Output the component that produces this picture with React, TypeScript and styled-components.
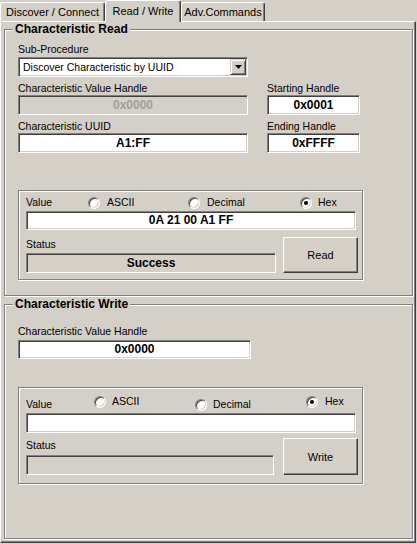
import React from 'react';
import styled, { createGlobalStyle, css } from 'styled-components';

const FACE = '#d4d0c8';

const GlobalStyle = createGlobalStyle`
  html, body { margin: 0; padding: 0; background: ${FACE}; }
  body { font-family: "Liberation Sans", Arial, sans-serif; color: #000; }
  *, *::before, *::after { box-sizing: border-box; }
`;

const sunken = css`
  border: 1px solid;
  border-color: #808080 #ffffff #ffffff #808080;
  box-shadow: inset 1px 1px 0 #404040, inset -1px -1px 0 ${FACE};
`;

const raised = css`
  background: ${FACE};
  border: 1px solid;
  border-color: #ffffff #404040 #404040 #ffffff;
  box-shadow: inset -1px -1px 0 #808080;
`;

const etched = css`
  border: 1px solid #808080;
  box-shadow: inset 1px 1px 0 #ffffff, 1px 1px 0 #ffffff;
`;

const Window = styled.div`
  width: 417px;
  height: 544px;
  background: ${FACE};
  display: flex;
  flex-direction: column;
  overflow: hidden;
  font-size: 10.5px;
  line-height: 13px;
`;

const TabStrip = styled.div`
  flex: none;
  height: 21px;
  display: flex;
  align-items: flex-end;
`;

const Tab = styled.div<{ $active?: boolean; $width: number }>`
  flex: none;
  width: ${p => p.$width}px;
  height: ${p => (p.$active ? 22 : 19)}px;
  margin-bottom: ${p => (p.$active ? -1 : 0)}px;
  padding-top: ${p => (p.$active ? 4 : 3)}px;
  position: relative;
  z-index: ${p => (p.$active ? 2 : 1)};
  background: ${FACE};
  border-top: 1px solid #ffffff;
  border-left: 1px solid #ffffff;
  border-right: 1px solid #404040;
  box-shadow: inset -1px 0 0 #808080;
  border-radius: 3px 3px 0 0;
  font-size: 11px;
  line-height: 13px;
  text-align: center;
  white-space: nowrap;
`;

const Panel = styled.div`
  flex: 1;
  min-height: 0;
  margin: 0 1px 1px 0;
  border: 1px solid;
  border-color: #ffffff #404040 #404040 #ffffff;
  box-shadow: inset -1px -1px 0 #808080;
  padding: 0 2px 3px 3px;
  display: flex;
  flex-direction: column;
`;

const Group = styled.section<{ $top: number; $grow?: boolean }>`
  ${etched};
  margin-top: ${p => p.$top}px;
  display: flex;
  flex-direction: column;
  ${p => p.$grow && css`flex: 1;`}
`;

const Legend = styled.h2`
  align-self: flex-start;
  margin: -8px 0 0 8px;
  padding: 0 2px;
  background: ${FACE};
  font-size: 12px;
  line-height: 14px;
  font-weight: bold;
  white-space: nowrap;
`;

const GroupBody = styled.div<{ $pad: string }>`
  padding: ${p => p.$pad};
  display: flex;
  flex-direction: column;
  align-items: flex-start;
`;

const FieldGrid = styled.div`
  display: grid;
  grid-template-columns: 230px 93px;
  column-gap: 19px;
  row-gap: 5px;
`;

const Field = styled.div<{ $gap?: number; $span?: boolean }>`
  display: flex;
  flex-direction: column;
  gap: ${p => p.$gap ?? 0}px;
  ${p => p.$span && css`grid-column: 1 / -1;`}
`;

const FieldLabel = styled.span<{ $drop?: number }>`
  display: block;
  line-height: 13px;
  white-space: nowrap;
  margin-top: ${p => p.$drop ?? 0}px;
`;

const TextField = styled.div<{ $width?: number; $height: number; $fill?: string; $muted?: boolean; $right?: number }>`
  ${sunken};
  width: ${p => (p.$width ? `${p.$width}px` : 'auto')};
  height: ${p => p.$height}px;
  margin-right: ${p => p.$right ?? 0}px;
  background: ${p => p.$fill ?? '#ffffff'};
  display: flex;
  align-items: center;
  justify-content: center;
  font-size: 12px;
  font-weight: bold;
  color: ${p => (p.$muted ? '#a19e98' : '#000000')};
  white-space: nowrap;
`;

const Combo = styled.div`
  ${sunken};
  width: 230px;
  height: 20px;
  margin-top: 1px;
  padding: 1px;
  background: #ffffff;
  display: flex;
  align-items: center;
`;

const ComboText = styled.span`
  flex: 1;
  padding-left: 3px;
  white-space: nowrap;
`;

const ComboButton = styled.span`
  flex: none;
  width: 16px;
  height: 16px;
  background: ${FACE};
  border: 1px solid;
  border-color: ${FACE} #404040 #404040 ${FACE};
  box-shadow: inset 1px 1px 0 #ffffff, inset -1px -1px 0 #808080;
  display: flex;
  align-items: center;
  justify-content: center;
`;

const ValueBox = styled.div<{ $top: number; $padTop: number; $padBottom: number }>`
  ${etched};
  width: 345px;
  margin-top: ${p => p.$top}px;
  padding: ${p => p.$padTop}px 4px ${p => p.$padBottom}px 7px;
  display: flex;
  flex-direction: column;
`;

const OptionRow = styled.div<{ $cols: string }>`
  display: grid;
  grid-template-columns: ${p => p.$cols};
  align-items: start;
`;

const Radio = styled.label<{ $gap: number; $drop?: number }>`
  display: flex;
  align-items: flex-start;
  gap: ${p => p.$gap}px;
  margin-top: ${p => p.$drop ?? 0}px;
  line-height: 13px;
  white-space: nowrap;
`;

const RadioDot = styled.span<{ $checked?: boolean }>`
  flex: none;
  width: 12px;
  height: 12px;
  margin-top: 1px;
  border-radius: 50%;
  background: #ffffff;
  border: 1px solid;
  border-color: #808080 #ffffff #ffffff #808080;
  box-shadow: inset 1px 1px 0 #404040, inset -1px -1px 0 ${FACE};
  display: flex;
  align-items: center;
  justify-content: center;
  &::after {
    content: '';
    width: 4px;
    height: 4px;
    border-radius: 50%;
    background: #000000;
    display: ${p => (p.$checked ? 'block' : 'none')};
  }
`;

const ActionRow = styled.div<{ $top: number; $gap: number }>`
  display: flex;
  align-items: flex-end;
  gap: ${p => p.$gap}px;
  margin-top: ${p => p.$top}px;
`;

const StatusCol = styled.div<{ $width: number; $gap: number }>`
  width: ${p => p.$width}px;
  display: flex;
  flex-direction: column;
  gap: ${p => p.$gap}px;
`;

const PushButton = styled.button<{ $height: number }>`
  ${raised};
  flex: none;
  width: 75px;
  height: ${p => p.$height}px;
  padding: 0;
  font-family: inherit;
  font-size: 11px;
  color: #000000;
`;

type RadioSpec = { label: string; gap: number; drop?: number; checked?: boolean };

const ValueOptions: React.FC<{ cols: string; labelDrop: number; radios: RadioSpec[] }> = ({ cols, labelDrop, radios }) => (
  <OptionRow $cols={cols}>
    <FieldLabel $drop={labelDrop}>Value</FieldLabel>
    {radios.map(r => (
      <Radio key={r.label} $gap={r.gap} $drop={r.drop}>
        <RadioDot $checked={r.checked} />
        <span>{r.label}</span>
      </Radio>
    ))}
  </OptionRow>
);

export default function App() {
  return (
    <>
      <GlobalStyle />
      <Window>
        <TabStrip>
          <Tab $width={105}>Discover / Connect</Tab>
          <Tab $width={76} $active>Read / Write</Tab>
          <Tab $width={84}>Adv.Commands</Tab>
        </TabStrip>
        <Panel>
          <Group $top={7}>
            <Legend>Characteristic Read</Legend>
            <GroupBody $pad="7px 0 15px 13px">
              <FieldGrid>
                <Field $span>
                  <FieldLabel>Sub-Procedure</FieldLabel>
                  <Combo>
                    <ComboText>Discover Characteristic by UUID</ComboText>
                    <ComboButton>
                      <svg width="7" height="4" viewBox="0 0 7 4">
                        <polygon points="0,0 7,0 3.5,4" fill="#000" />
                      </svg>
                    </ComboButton>
                  </Combo>
                </Field>
                <Field>
                  <FieldLabel>Characteristic Value Handle</FieldLabel>
                  <TextField $height={20} $fill={FACE} $muted>0x0000</TextField>
                </Field>
                <Field>
                  <FieldLabel>Starting Handle</FieldLabel>
                  <TextField $height={20}>0x0001</TextField>
                </Field>
                <Field>
                  <FieldLabel>Characteristic UUID</FieldLabel>
                  <TextField $height={20}>A1:FF</TextField>
                </Field>
                <Field>
                  <FieldLabel>Ending Handle</FieldLabel>
                  <TextField $height={20}>0xFFFF</TextField>
                </Field>
              </FieldGrid>
              <ValueBox $top={37} $padTop={5} $padBottom={6}>
                <ValueOptions
                  cols="62px 100px 112px 1fr"
                  labelDrop={0}
                  radios={[
                    { label: 'ASCII', gap: 7 },
                    { label: 'Decimal', gap: 7 },
                    { label: 'Hex', gap: 6, checked: true },
                  ]}
                />
                <Field $gap={2}>
                  <span />
                  <TextField $height={19} $right={2}>0A 21 00 A1 FF</TextField>
                </Field>
                <ActionRow $top={7} $gap={7}>
                  <StatusCol $width={250} $gap={2}>
                    <FieldLabel>Status</FieldLabel>
                    <TextField $height={20} $fill={FACE}>Success</TextField>
                  </StatusCol>
                  <PushButton $height={36}>Read</PushButton>
                </ActionRow>
              </ValueBox>
            </GroupBody>
          </Group>

          <Group $top={8} $grow>
            <Legend>Characteristic Write</Legend>
            <GroupBody $pad="14px 0 0 13px">
              <Field $gap={2}>
                <FieldLabel>Characteristic Value Handle</FieldLabel>
                <TextField $width={233} $height={19}>0x0000</TextField>
              </Field>
              <ValueBox $top={28} $padTop={7} $padBottom={8}>
                <ValueOptions
                  cols="68px 101px 111px 1fr"
                  labelDrop={3}
                  radios={[
                    { label: 'ASCII', gap: 6, drop: 0 },
                    { label: 'Decimal', gap: 6, drop: 3 },
                    { label: 'Hex', gap: 7, drop: 0, checked: true },
                  ]}
                />
                <Field $gap={2}>
                  <span />
                  <TextField $height={20} $right={2} />
                </Field>
                <ActionRow $top={5} $gap={9}>
                  <StatusCol $width={248} $gap={3}>
                    <FieldLabel>Status</FieldLabel>
                    <TextField $height={20} $fill={FACE} />
                  </StatusCol>
                  <PushButton $height={37}>Write</PushButton>
                </ActionRow>
              </ValueBox>
            </GroupBody>
          </Group>
        </Panel>
      </Window>
    </>
  );
}
